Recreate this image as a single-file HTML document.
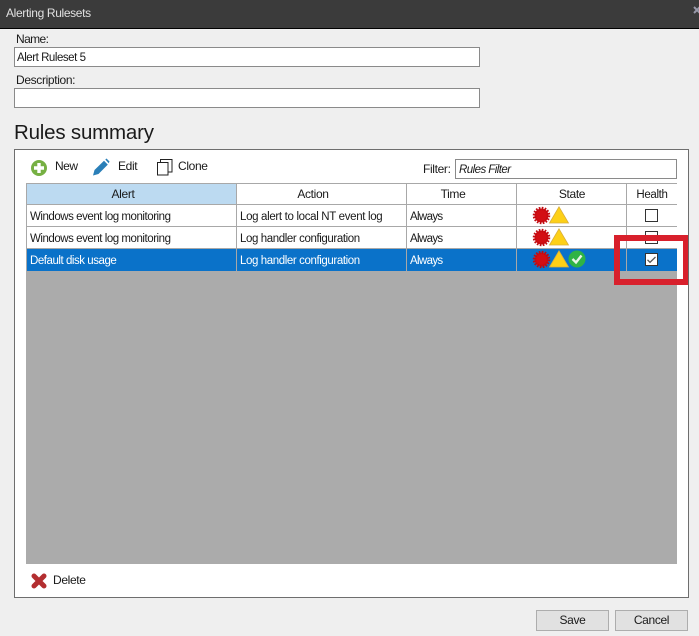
<!DOCTYPE html>
<html><head><meta charset="utf-8">
<style>
html,body{margin:0;padding:0}
body{width:699px;height:636px;background:#efefef;position:relative;overflow:hidden;font-family:"Liberation Sans",sans-serif;font-size:12px;color:#1a1a1a}
.a{position:absolute;white-space:nowrap}
.t{position:absolute;white-space:nowrap;letter-spacing:-.35px;line-height:14px}
.r{font-size:11.5px;margin-top:1px}
.w{letter-spacing:-.46px}
.l{letter-spacing:-.4px}
.y{letter-spacing:-.65px}
.box{position:absolute;box-sizing:border-box;background:#fff;border:1px solid #8a8a8a}
.v{position:absolute;width:1px;background:#a8a8a8}
.h{position:absolute;height:1px;background:#a8a8a8;left:26px;width:651px}
.c{text-align:center}
.btn{position:absolute;box-sizing:border-box;top:610px;height:21px;background:#e1e1e1;border:1px solid #adadad;text-align:center;line-height:18px;letter-spacing:-.35px}
svg{position:absolute;overflow:visible}
</style></head><body>
<div class="a" style="left:0;top:0;width:699px;height:28px;background:#3b3b3b"></div>
<div class="a" style="left:0;top:28px;width:699px;height:1px;background:#000"></div>
<div class="t" style="left:6px;top:6px;color:#e0e0e0">Alerting Rulesets</div>
<svg style="left:693px;top:5px" width="6" height="10"><path d="M1 2L7 8M7 2L1 8" stroke="#99a" stroke-width="2"/></svg>

<div class="t" style="left:16px;top:32px;letter-spacing:-.6px">Name:</div>
<div class="box" style="left:14px;top:47px;width:466px;height:20px"></div>
<div class="t r" style="left:17px;top:50px;letter-spacing:-.46px">Alert Ruleset 5</div>
<div class="t" style="left:16px;top:73px">Description:</div>
<div class="box" style="left:14px;top:88px;width:466px;height:20px"></div>
<div class="a" style="left:14px;top:120px;font-size:20.5px;line-height:26px;letter-spacing:-.2px">Rules summary</div>

<div class="box" style="left:14px;top:149px;width:675px;height:449px;border-color:#6e6e6e"></div>

<svg style="left:31px;top:160px" width="16" height="16"><circle cx="8" cy="8" r="8" fill="#76b043"/><path d="M8 3V13M3 8H13" stroke="#fff" stroke-width="3.400"/></svg>
<div class="t" style="left:55px;top:159px;letter-spacing:-.5px">New</div>
<svg style="left:92px;top:158px" width="18" height="18"><path d="M1 17.500L2.500 12L12 2.800L15.800 6.600L6.500 16Z" fill="#2a7fb8"/><path d="M13.300 1.500L14.500 .5L17.500 3.500L16.700 5.300Z" fill="#2a7fb8"/></svg>
<div class="t" style="left:118px;top:159px">Edit</div>
<svg style="left:157px;top:159px" width="16" height="17"><rect x=".5" y="3.500" width="10.500" height="12.500" fill="#fff" stroke="#222"/><path d="M3.500 3.500V.5H15V13H11" fill="none" stroke="#222"/></svg>
<div class="t" style="left:178px;top:159px">Clone</div>

<div class="t" style="left:423px;top:162px">Filter:</div>
<div class="box" style="left:455px;top:159px;width:222px;height:20px"></div>
<div class="t r" style="left:459px;top:162px;font-style:italic;letter-spacing:-.55px">Rules Filter</div>

<!-- table -->
<div class="a" style="left:26px;top:183px;width:651px;height:381px;background:#ababab"></div>
<div class="a" style="left:26px;top:183px;width:651px;height:88px;background:#fff"></div>
<div class="a" style="left:27px;top:184px;width:210px;height:20px;background:#bcdaf1"></div>
<div class="a" style="left:26px;top:249px;width:651px;height:22px;background:#0a72c9"></div>
<div class="h" style="top:183px"></div>
<div class="h" style="top:204px"></div>
<div class="h" style="top:226px"></div>
<div class="h" style="top:248px"></div>
<div class="v" style="left:26px;top:183px;height:88px"></div>
<div class="v" style="left:236px;top:183px;height:88px"></div>
<div class="v" style="left:406px;top:183px;height:88px"></div>
<div class="v" style="left:516px;top:183px;height:88px"></div>
<div class="v" style="left:626px;top:183px;height:88px"></div>

<div class="t c" style="left:27px;width:192px;top:187px">Alert</div>
<div class="t c" style="left:237px;width:152px;top:187px">Action</div>
<div class="t c" style="left:407px;width:92px;top:187px">Time</div>
<div class="t c" style="left:517px;width:110px;top:187px">State</div>
<div class="t c r" style="left:627px;width:50px;top:187px">Health</div>

<div class="t r w" style="left:30px;top:209px">Windows event log monitoring</div>
<div class="t r" style="left:240px;top:209px;letter-spacing:-.33px">Log alert to local NT event log</div>
<div class="t r y" style="left:410px;top:209px">Always</div>
<div class="t r w" style="left:30px;top:231px">Windows event log monitoring</div>
<div class="t r l" style="left:240px;top:231px">Log handler configuration</div>
<div class="t r y" style="left:410px;top:231px">Always</div>
<div class="t r w" style="left:30px;top:253px;color:#fff">Default disk usage</div>
<div class="t r l" style="left:240px;top:253px;color:#fff">Log handler configuration</div>
<div class="t r y" style="left:410px;top:253px;color:#fff">Always</div>

<!-- state icons -->
<svg style="left:533px;top:206px" width="36" height="20"><circle cx="8.500" cy="9.500" r="7" fill="#d30e13"/><circle cx="8.500" cy="9.500" r="7" fill="none" stroke="#c00b11" stroke-width="3.500" stroke-dasharray="1.500 1.250"/><path d="M26 .8L35.500 17H16.500Z" fill="#fdd017" stroke="#d9ae3a" stroke-width=".8"/></svg>
<svg style="left:533px;top:228px" width="36" height="20"><circle cx="8.500" cy="9.500" r="7" fill="#d30e13"/><circle cx="8.500" cy="9.500" r="7" fill="none" stroke="#c00b11" stroke-width="3.500" stroke-dasharray="1.500 1.250"/><path d="M26 .8L35.500 17H16.500Z" fill="#fdd017" stroke="#d9ae3a" stroke-width=".8"/></svg>
<svg style="left:533px;top:250px" width="54" height="20"><circle cx="8.500" cy="9.500" r="7" fill="#d30e13"/><circle cx="8.500" cy="9.500" r="7" fill="none" stroke="#c00b11" stroke-width="3.500" stroke-dasharray="1.500 1.250"/><path d="M26 .8L35.500 17H16.500Z" fill="#fdd017" stroke="#d9ae3a" stroke-width=".8"/><circle cx="44" cy="9" r="8.500" fill="#2fb344"/><path d="M39.500 9L43 12.500L48.500 5.500" fill="none" stroke="#e8f5e8" stroke-width="2.400"/></svg>

<!-- checks -->
<div class="box" style="left:645px;top:209px;width:13px;height:13px;border-color:#333"></div>
<div class="box" style="left:645px;top:231px;width:13px;height:13px;border-color:#333"></div>
<div class="box" style="left:645px;top:253px;width:13px;height:13px;border-color:#333"></div>
<svg style="left:645px;top:253px" width="13" height="13"><path d="M2.500 6.800L5 9.300L10.500 4" fill="none" stroke="#555" stroke-width="1.300"/></svg>

<!-- red highlight -->
<div class="a" style="left:614px;top:235px;width:74px;height:50px;box-sizing:border-box;border:6px solid #d8202c;border-right-width:5px"></div>

<svg style="left:31px;top:573px" width="16" height="16"><path d="M3 3L13 13M13 3L3 13" stroke="#b32e30" stroke-width="5" stroke-linecap="round"/></svg>
<div class="t" style="left:53px;top:573px">Delete</div>

<div class="btn" style="left:536px;width:73px">Save</div>
<div class="btn" style="left:615px;width:73px">Cancel</div>
</body></html>
